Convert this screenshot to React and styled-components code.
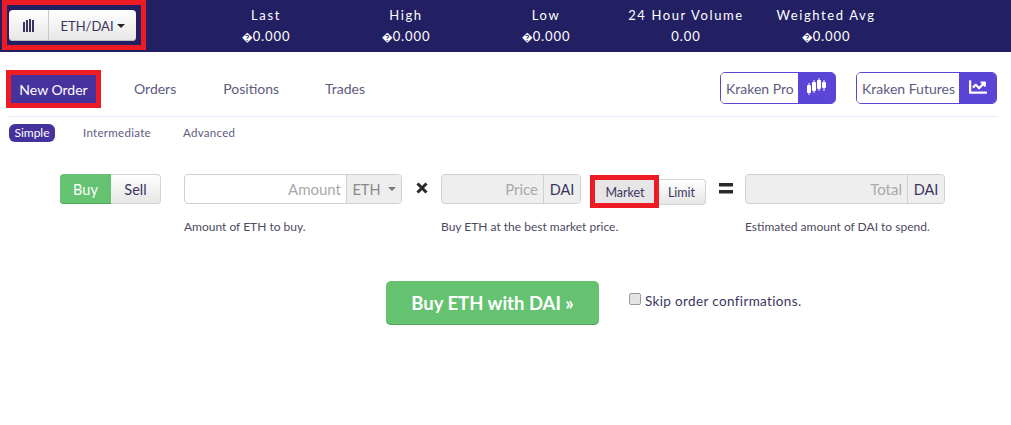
import React from "react";
import styled, { createGlobalStyle } from "styled-components";
import { FaChartLine } from "react-icons/fa";

const GlobalStyle = createGlobalStyle`
  html, body { margin: 0; padding: 0; background: #fff; }
  body {
    font-family: "Lato", "Open Sans", sans-serif;
    color: #2f2a5c;
    width: 1011px;
    height: 425px;
    overflow: hidden;
  }
`;

/* red annotation boxes lying over the screenshot */
const Marker = styled.div`
  position: absolute;
  inset: ${({ $inset }) => $inset};
  border: 5px solid #ed1c24;
  pointer-events: none;
`;

const PairMarker = styled(Marker)`
  width: 144px;
  height: 50px;
  box-sizing: border-box;
`;

const Header = styled.header`
  position: relative;
  height: 52px;
  background: #231f63;
  display: flex;
  align-items: flex-start;
`;

const PairSelector = styled.div`
  display: flex;
  flex: none;
  margin: 10px 0 0 9px;
  width: 127px;
  height: 31px;
  border-radius: 4px;
  overflow: hidden;
  background: linear-gradient(#ffffff, #e6e6e6);
  box-shadow: inset 0 -1px 0 #bdbdc4;
`;

const PairIcon = styled.div`
  width: 39px;
  border-right: 1px solid #c8c8cc;
  display: flex;
  align-items: center;
  justify-content: center;
`;

const PairLabel = styled.div`
  flex: 1;
  display: flex;
  align-items: center;
  justify-content: center;
  gap: 3px;
  font-size: 13px;
  color: #3a3560;
`;

const Caret = styled.span`
  display: inline-block;
  width: 0;
  height: 0;
  border-left: 4px solid transparent;
  border-right: 4px solid transparent;
  border-top: 4px solid ${({ $color }) => $color || "#222"};
`;

const Stats = styled.div`
  display: flex;
  margin-left: 60px;
`;

const Stat = styled.div`
  width: 140px;
  text-align: center;
  color: #fff;
`;

const StatLabel = styled.div`
  font-size: 13px;
  letter-spacing: 1.6px;
  line-height: 16px;
  margin-top: 7px;
`;

const StatValue = styled.div`
  font-size: 13px;
  letter-spacing: 0.9px;
  line-height: 16px;
  margin-top: 5px;
`;

const Currency = styled.span`
  font-size: 11px;
  letter-spacing: 0;
`;

const TabBar = styled.nav`
  margin: 0 14px 0 9px;
  height: 65px;
  box-sizing: border-box;
  border-bottom: 1px solid #e8e6fb;
  display: flex;
  align-items: flex-start;
  padding: 23px 0 0 2px;
`;

const ActiveTab = styled.div`
  position: relative;
  width: 85px;
  height: 28px;
  background: #46329c;
  color: #fff;
  font-size: 14px;
  display: flex;
  align-items: center;
  justify-content: center;
`;

const Tab = styled.div`
  font-size: 14px;
  color: #5e5a80;
  line-height: 28px;
  margin-left: ${({ $gap }) => $gap}px;
`;

const LinkGroup = styled.div`
  margin-left: auto;
  margin-top: -3px;
  display: flex;
  gap: 20px;
`;

const ExternalLink = styled.div`
  display: flex;
  height: 32px;
  box-sizing: border-box;
  border: 1px solid #5b45d6;
  border-radius: 5px;
  overflow: hidden;
  font-size: 14px;
  color: #5e5a80;
`;

const LinkText = styled.div`
  display: flex;
  align-items: center;
  box-sizing: border-box;
  width: ${({ $width }) => $width}px;
  padding-left: 5px;
  white-space: nowrap;
  background: #fff;
`;

const LinkIcon = styled.div`
  width: 37px;
  padding-bottom: 3px;
  box-sizing: border-box;
  background: #5b45d6;
  color: #fff;
  display: flex;
  align-items: center;
  justify-content: center;
`;

const Modes = styled.div`
  display: flex;
  align-items: center;
  margin: 6px 0 0 9px;
  height: 19px;
  font-size: 11.5px;
`;

const ModePill = styled.div`
  background: #46329c;
  color: #fff;
  width: 46px;
  height: 18px;
  border-radius: 6px;
  display: flex;
  align-items: center;
  justify-content: center;
  font-size: 12px;
`;

const Mode = styled.div`
  color: #5e5a80;
  letter-spacing: 0.3px;
  margin-left: ${({ $gap }) => $gap}px;
`;

const FormRow = styled.div`
  display: flex;
  align-items: flex-start;
  margin: 32px 0 0 60px;
`;

const Toggle = styled.div`
  display: flex;
  width: 101px;
  height: 30px;
  margin-right: 23px;
`;

const ToggleBuy = styled.div`
  width: 51px;
  background: #64c270;
  color: #fff;
  border-radius: 4px 0 0 4px;
  box-shadow: inset 0 -1px 0 #4da65a;
  display: flex;
  align-items: center;
  justify-content: center;
  font-size: 14.5px;
`;

const ToggleSell = styled.div`
  flex: 1;
  background: linear-gradient(#ffffff, #e6e6e6);
  border: 1px solid #d4d4d8;
  border-left: 0;
  border-radius: 0 4px 4px 0;
  display: flex;
  align-items: center;
  justify-content: center;
  font-size: 14.5px;
  color: #3a3560;
`;

const Field = styled.div`
  width: ${({ $width }) => $width}px;
`;

const InputGroup = styled.div`
  display: flex;
  height: 30px;
  box-sizing: border-box;
  border: 1px solid #d0d0d0;
  border-radius: 4px;
  overflow: hidden;
  background: ${({ $disabled }) => ($disabled ? "#eeeeee" : "#fff")};
  font-size: 15px;
`;

const Placeholder = styled.div`
  flex: 1;
  display: flex;
  align-items: center;
  justify-content: flex-end;
  padding-right: 5px;
  color: #a9a9a9;
`;

const Addon = styled.div`
  width: ${({ $width }) => $width}px;
  border-left: 1px solid #d0d0d0;
  background: #eeeeee;
  color: ${({ $muted }) => ($muted ? "#8a8a8a" : "#3a3560")};
  font-size: 14.5px;
  display: flex;
  align-items: center;
  justify-content: center;
  gap: 7px;
`;

const Help = styled.div`
  font-size: 12px;
  line-height: 14px;
  margin-top: 16px;
  color: #4d4a63;
  white-space: nowrap;
`;

const Operator = styled.div`
  width: 39px;
  height: 28px;
  display: flex;
  align-items: center;
  justify-content: center;
  color: #2a2a2a;
`;

const OrderType = styled.div`
  display: flex;
  margin: 5px 0 0 11px;
  height: 26px;
  width: 114px;
`;

const MarketButton = styled.div`
  position: relative;
  width: 66px;
  background: #e6e6e6;
  display: flex;
  align-items: center;
  justify-content: center;
  font-size: 12.5px;
  color: #3a3560;
`;

const LimitButton = styled.div`
  flex: 1;
  background: linear-gradient(#ffffff, #e6e6e6);
  border: 1px solid #d4d4d8;
  border-left: 0;
  border-radius: 0 4px 4px 0;
  display: flex;
  align-items: center;
  justify-content: center;
  font-size: 12.5px;
  color: #3a3560;
`;

const SubmitRow = styled.div`
  display: flex;
  align-items: flex-start;
  margin: 47px 0 0 386px;
`;

const SubmitButton = styled.div`
  width: 213px;
  height: 44px;
  background: #64c270;
  border-radius: 5px;
  box-shadow: inset 0 -1px 0 #4da65a;
  color: #fff;
  font-size: 18.5px;
  font-weight: 700;
  display: flex;
  align-items: center;
  justify-content: center;
`;

const SkipLabel = styled.label`
  display: flex;
  align-items: flex-start;
  margin: 12px 0 0 30px;
  font-size: 13.5px;
  line-height: 16px;
  color: #3a3560;
  letter-spacing: 0.35px;
`;

const SkipBox = styled.input`
  width: 12px;
  height: 12px;
  margin: 0 4px 0 0;
  appearance: none;
  box-sizing: border-box;
  border: 1px solid #9a9a9a;
  border-radius: 2px;
  background: #e4e4e4;
`;

const BarsIcon = () => (
  <svg width="11" height="13" viewBox="0 0 11 13" fill="#3a3560">
    <rect x="0" y="3" width="2" height="10" />
    <rect x="3" y="1" width="2" height="12" />
    <rect x="6" y="0" width="2" height="13" />
    <rect x="9" y="1" width="2" height="12" />
  </svg>
);

const CandleIcon = () => (
  <svg width="19" height="18" viewBox="0 0 19 18" fill="#fff">
    <rect x="0" y="7" width="4" height="8" rx="1" />
    <rect x="1.5" y="5" width="1" height="12" />
    <rect x="5" y="4" width="4" height="9" rx="1" />
    <rect x="6.5" y="2" width="1" height="13" />
    <rect x="10" y="2" width="4" height="9" rx="1" />
    <rect x="11.5" y="0" width="1" height="13" />
    <rect x="15" y="4" width="4" height="6" rx="1" />
    <rect x="16.5" y="2" width="1" height="11" />
  </svg>
);

const CrossIcon = () => (
  <svg width="12" height="12" viewBox="0 0 12 12">
    <path d="M1.5 1.5 L10.5 10.5 M10.5 1.5 L1.5 10.5" stroke="#2a2a2a" strokeWidth="3" />
  </svg>
);

const EqualsIcon = () => (
  <svg width="14" height="11" viewBox="0 0 14 11" fill="#2a2a2a">
    <rect x="0" y="0" width="14" height="3.5" />
    <rect x="0" y="7" width="14" height="3.5" />
  </svg>
);

const stats = [
  { label: "Last", value: "0.000", symbol: true },
  { label: "High", value: "0.000", symbol: true },
  { label: "Low", value: "0.000", symbol: true },
  { label: "24 Hour Volume", value: "0.00" },
  { label: "Weighted Avg", value: "0.000", symbol: true },
];

export default function App() {
  return (
    <>
      <GlobalStyle />
      <Header>
        <PairSelector>
          <PairIcon>
            <BarsIcon />
          </PairIcon>
          <PairLabel>
            ETH/DAI <Caret />
          </PairLabel>
        </PairSelector>
        <PairMarker $inset="0 auto auto 2px" />
        <Stats>
          {stats.map((s) => (
            <Stat key={s.label}>
              <StatLabel>{s.label}</StatLabel>
              <StatValue>
                {s.symbol && <Currency>{"\uFFFD"}</Currency>}
                {s.value}
              </StatValue>
            </Stat>
          ))}
        </Stats>
      </Header>

      <TabBar>
        <ActiveTab>
          New Order
          <Marker $inset="-5px" />
        </ActiveTab>
        <Tab $gap={38}>Orders</Tab>
        <Tab $gap={47}>Positions</Tab>
        <Tab $gap={46}>Trades</Tab>
        <LinkGroup>
          <ExternalLink>
            <LinkText $width={77}>Kraken Pro</LinkText>
            <LinkIcon>
              <CandleIcon />
            </LinkIcon>
          </ExternalLink>
          <ExternalLink>
            <LinkText $width={102}>Kraken Futures</LinkText>
            <LinkIcon>
              <FaChartLine size={18} />
            </LinkIcon>
          </ExternalLink>
        </LinkGroup>
      </TabBar>

      <Modes>
        <ModePill>Simple</ModePill>
        <Mode $gap={28}>Intermediate</Mode>
        <Mode $gap={32}>Advanced</Mode>
      </Modes>

      <FormRow>
        <Toggle>
          <ToggleBuy>Buy</ToggleBuy>
          <ToggleSell>Sell</ToggleSell>
        </Toggle>
        <Field $width={218}>
          <InputGroup>
            <Placeholder>Amount</Placeholder>
            <Addon $width={54} $muted>
              ETH <Caret $color="#777" />
            </Addon>
          </InputGroup>
          <Help>Amount of ETH to buy.</Help>
        </Field>
        <Operator>
          <CrossIcon />
        </Operator>
        <Field $width={140}>
          <InputGroup $disabled>
            <Placeholder>Price</Placeholder>
            <Addon $width={36}>DAI</Addon>
          </InputGroup>
          <Help>Buy ETH at the best market price.</Help>
        </Field>
        <OrderType>
          <MarketButton>
            Market
            <Marker $inset="-4px -1px -3px -2px" />
          </MarketButton>
          <LimitButton>Limit</LimitButton>
        </OrderType>
        <Operator>
          <EqualsIcon />
        </Operator>
        <Field $width={200}>
          <InputGroup $disabled>
            <Placeholder>Total</Placeholder>
            <Addon $width={36}>DAI</Addon>
          </InputGroup>
          <Help>Estimated amount of DAI to spend.</Help>
        </Field>
      </FormRow>

      <SubmitRow>
        <SubmitButton>Buy ETH with DAI »</SubmitButton>
        <SkipLabel>
          <SkipBox type="checkbox" />
          Skip order confirmations.
        </SkipLabel>
      </SubmitRow>
    </>
  );
}
